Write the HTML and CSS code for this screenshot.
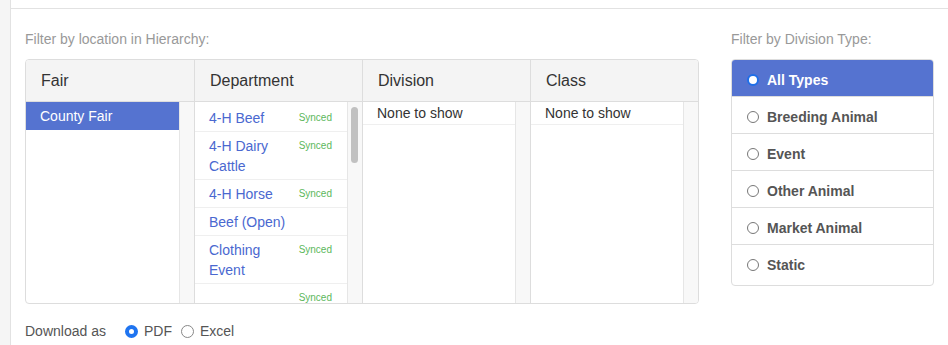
FILE: index.html
```html
<!DOCTYPE html>
<html lang="en">
    <head>
        <meta charset="UTF-8">
        <meta name="viewport" content="width=device-width, initial-scale=1.0">
        <title>Report Filters</title>
        <link rel="stylesheet" href="styles.css">
    </head>
    <body>
        <div class="page">
            <aside class="side"></aside>
            <main class="main">
                <div class="filters">
                    <section class="hierarchy">
                        <p class="filter-label">Filter by location in Hierarchy:</p>
                        <div class="hier-box">
                            <div class="col">
                                <div class="col-head">Fair</div>
                                <div class="col-body">
                                    <ul class="list">
                                        <li class="item selected">County Fair</li>
                                    </ul>
                                    <div class="track"></div>
                                </div>
                            </div>
                            <div class="col">
                                <div class="col-head">Department</div>
                                <div class="col-body">
                                    <ul class="list departments">
                                        <li class="item link"><span>4-H Beef</span><span class="synced">Synced</span></li>
                                        <li class="item link"><span>4-H Dairy<br>Cattle</span><span class="synced">Synced</span></li>
                                        <li class="item link"><span>4-H Horse</span><span class="synced">Synced</span></li>
                                        <li class="item link"><span>Beef (Open)</span></li>
                                        <li class="item link"><span>Clothing<br>Event</span><span class="synced">Synced</span></li>
                                        <li class="item link"><span></span><span class="synced">Synced</span></li>
                                    </ul>
                                    <div class="track"><div class="thumb"></div></div>
                                </div>
                            </div>
                            <div class="col">
                                <div class="col-head">Division</div>
                                <div class="col-body">
                                    <ul class="list">
                                        <li class="item empty">None to show</li>
                                    </ul>
                                    <div class="track"></div>
                                </div>
                            </div>
                            <div class="col">
                                <div class="col-head">Class</div>
                                <div class="col-body">
                                    <ul class="list">
                                        <li class="item empty">None to show</li>
                                    </ul>
                                    <div class="track"></div>
                                </div>
                            </div>
                        </div>
                    </section>
                    <section class="types">
                        <p class="filter-label">Filter by Division Type:</p>
                        <ul class="type-list">
                            <li class="type active"><span class="radio"></span>All Types</li>
                            <li class="type"><span class="radio"></span>Breeding Animal</li>
                            <li class="type"><span class="radio"></span>Event</li>
                            <li class="type"><span class="radio"></span>Other Animal</li>
                            <li class="type"><span class="radio"></span>Market Animal</li>
                            <li class="type"><span class="radio"></span>Static</li>
                        </ul>
                    </section>
                </div>
                <div class="download">
                    <span class="download-label">Download as</span>
                    <label class="opt"><span class="radio checked"></span>PDF</label>
                    <label class="opt"><span class="radio"></span>Excel</label>
                </div>
            </main>
        </div>
    </body>
</html>
```

FILE: styles.css
```css
body {
    font-family: "Liberation Sans", Arial, sans-serif;
    margin: 0;
    padding: 0;
    color: #333;
    background: #fff;
}

ul {
    list-style: none;
    margin: 0;
    padding: 0;
}

.page {
    display: flex;
    min-height: 345px;
}

.side {
    width: 10px;
    background-color: #f5f5f5;
    border-right: 1px solid #e2e2e2;
    flex-shrink: 0;
}

.main {
    flex: 1;
    margin-top: 8px;
    border-top: 1px solid #e2e2e2;
    padding: 21px 14px 0 14px;
}

.filters {
    display: flex;
    gap: 32px;
}

.hierarchy {
    width: 674px;
}

.types {
    flex: 1;
}

.filter-label {
    margin: 0 0 11px 0;
    font-size: 14px;
    line-height: 18px;
    color: #999;
}

.hier-box {
    display: grid;
    grid-template-columns: repeat(4, 1fr);
    border: 1px solid #ddd;
    border-radius: 4px;
    overflow: hidden;
    height: 243px;
}

.col {
    display: flex;
    flex-direction: column;
    border-left: 1px solid #ddd;
    min-width: 0;
}

.col:first-child {
    border-left: none;
}

.col-head {
    background-color: #f4f4f4;
    border-bottom: 1px solid #ddd;
    padding: 10px 15px;
    font-size: 16px;
    line-height: 21px;
    color: #333;
}

.col-body {
    flex: 1;
    display: flex;
    min-height: 0;
}

.list {
    flex: 1;
    overflow: hidden;
}

.list.departments {
    padding-top: 2px;
}

.track {
    width: 14px;
    background-color: #f8f8f8;
    border-left: 1px solid #e6e6e6;
    position: relative;
}

.thumb {
    position: absolute;
    left: 3px;
    top: 5px;
    width: 7px;
    height: 56px;
    border-radius: 4px;
    background-color: #c1c1c1;
}

.item {
    font-size: 14px;
    line-height: 20px;
    padding: 4px 14px;
    border-bottom: 1px solid #efefef;
}

.item.selected {
    background-color: #5573d0;
    color: #fff;
    border-bottom: none;
}

.item.link {
    display: flex;
    justify-content: space-between;
    align-items: flex-start;
    color: #4a68d0;
    padding: 4px 15px 3px 14px;
}

.synced {
    font-size: 10px;
    line-height: 20px;
    color: #5cb85c;
}

.item.empty {
    padding: 1px 14px;
    color: #333;
}

.type-list {
    border: 1px solid #ddd;
    border-radius: 4px;
    overflow: hidden;
}

.type {
    display: flex;
    align-items: center;
    padding: 11px 15px 7px 15px;
    line-height: 18px;
    font-size: 14px;
    font-weight: bold;
    color: #555;
    border-top: 1px solid #ddd;
}

.type:first-child {
    border-top: none;
}

.type:last-child {
    padding-bottom: 11px;
}

.type.active {
    background-color: #5573d0;
    color: #fff;
}

.radio {
    display: inline-block;
    box-sizing: border-box;
    width: 12px;
    height: 12px;
    border: 1px solid #777;
    border-radius: 50%;
    background: #fff;
    margin-right: 8px;
    flex-shrink: 0;
}

.type.active .radio {
    border: 2px solid #1f6fe8;
}

.download {
    display: flex;
    align-items: center;
    margin-top: 17px;
    font-size: 14px;
    line-height: 20px;
    color: #555;
}

.download-label {
    margin-right: 19px;
}

.opt {
    display: flex;
    align-items: center;
    margin-right: 9px;
}

.download .radio {
    width: 13px;
    height: 13px;
    border-color: #888;
    margin-right: 6px;
}

.download .radio.checked {
    border: 4px solid #1f74f0;
    background: #fff;
}
```
